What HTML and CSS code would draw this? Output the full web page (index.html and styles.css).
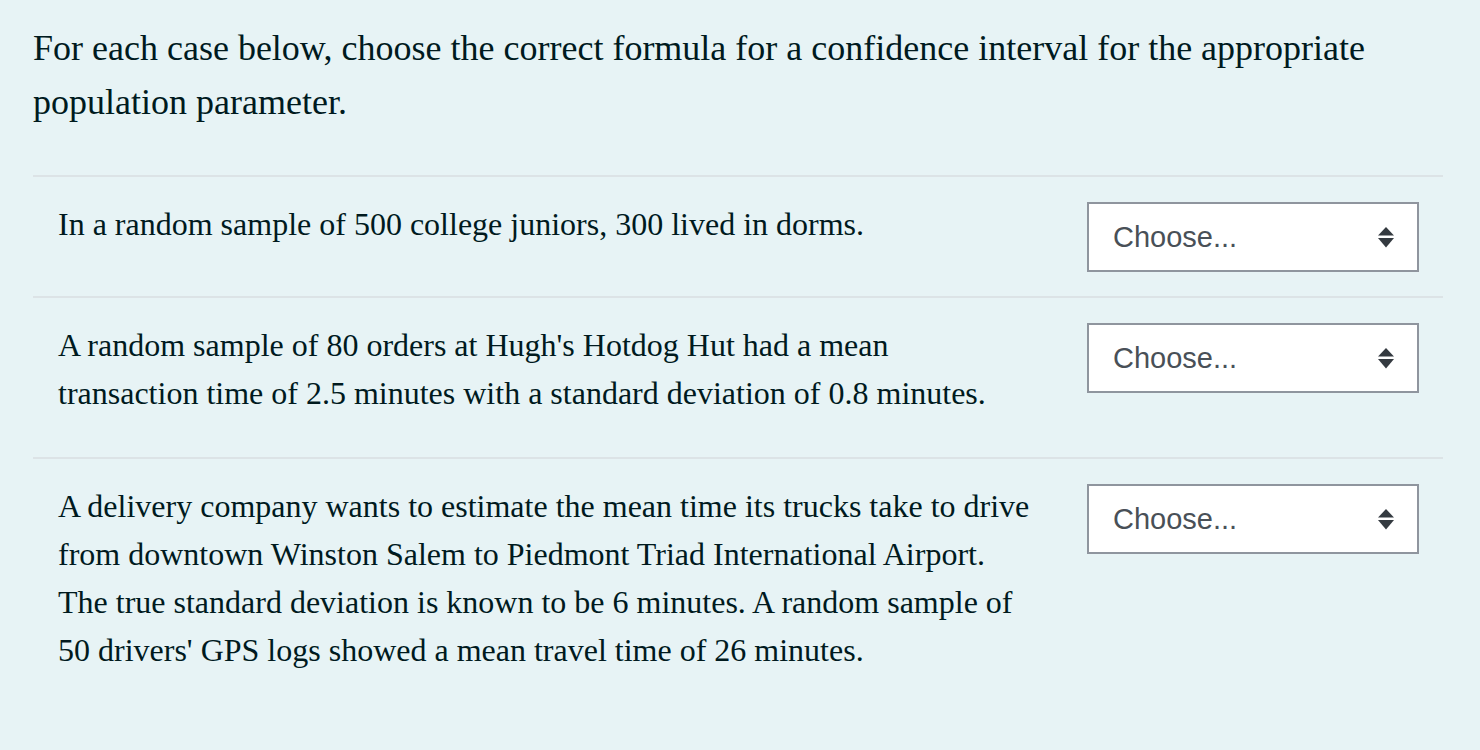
FILE: index.html
```html
<!DOCTYPE html>
<html lang="en">
<head>
<meta charset="utf-8">
<title>Confidence intervals</title>
<link rel="stylesheet" href="styles.css">
</head>
<body>
<div class="formulation">
  <p class="prompt">For each case below, choose the correct formula for a confidence interval for the appropriate population parameter.</p>
  <div class="rows">
    <div class="row">
      <p class="case">In a random sample of 500 college juniors, 300 lived in dorms.</p>
      <div class="select"><span class="select-text">Choose...</span><svg class="arrows" width="16" height="22" viewBox="0 0 16 22"><polygon points="0,8.5 8,0 16,8.5"/><polygon points="0,11 16,11 8,20.5"/></svg></div>
    </div>
    <div class="row">
      <p class="case">A random sample of 80 orders at Hugh's Hotdog Hut had a mean transaction time of 2.5 minutes with a standard deviation of 0.8 minutes.</p>
      <div class="select"><span class="select-text">Choose...</span><svg class="arrows" width="16" height="22" viewBox="0 0 16 22"><polygon points="0,8.5 8,0 16,8.5"/><polygon points="0,11 16,11 8,20.5"/></svg></div>
    </div>
    <div class="row">
      <p class="case">A delivery company wants to estimate the mean time its trucks take to drive from downtown Winston Salem to Piedmont Triad International Airport. The true standard deviation is known to be 6 minutes. A random sample of 50 drivers' GPS logs showed a mean travel time of 26 minutes.</p>
      <div class="select"><span class="select-text">Choose...</span><svg class="arrows" width="16" height="22" viewBox="0 0 16 22"><polygon points="0,8.5 8,0 16,8.5"/><polygon points="0,11 16,11 8,20.5"/></svg></div>
    </div>
  </div>
</div>
</body>
</html>
```
FILE: styles.css
```css
html, body {
  margin: 0;
  padding: 0;
  background: #e7f3f5;
}

body {
  font-family: "Liberation Serif", "Times New Roman", serif;
  color: #001a1e;
  height: 750px;
  overflow: hidden;
}

.formulation {
  padding: 21px 37px 0 33px;
}

.prompt {
  margin: 0 0 46px 0;
  font-size: 36px;
  line-height: 54px;
}

.row {
  display: grid;
  grid-template-columns: 1fr 332px;
  column-gap: 56px;
  align-items: start;
  border-top: 2px solid #dce3e6;
  padding: 23px 24px 24px 25px;
}

.case {
  margin: 0 0 16px 0;
  font-size: 32px;
  line-height: 48px;
}

.select {
  box-sizing: border-box;
  height: 70px;
  margin-top: 2px;
  background: #fff;
  border: 2px solid #8f959e;
  display: flex;
  align-items: center;
  justify-content: space-between;
  padding: 0 23px 0 24px;
}

.select-text {
  font-family: "Liberation Sans", Arial, sans-serif;
  font-size: 29px;
  color: #495057;
}

.arrows {
  fill: #343a40;
  display: block;
  margin-top: 2px;
}
```
